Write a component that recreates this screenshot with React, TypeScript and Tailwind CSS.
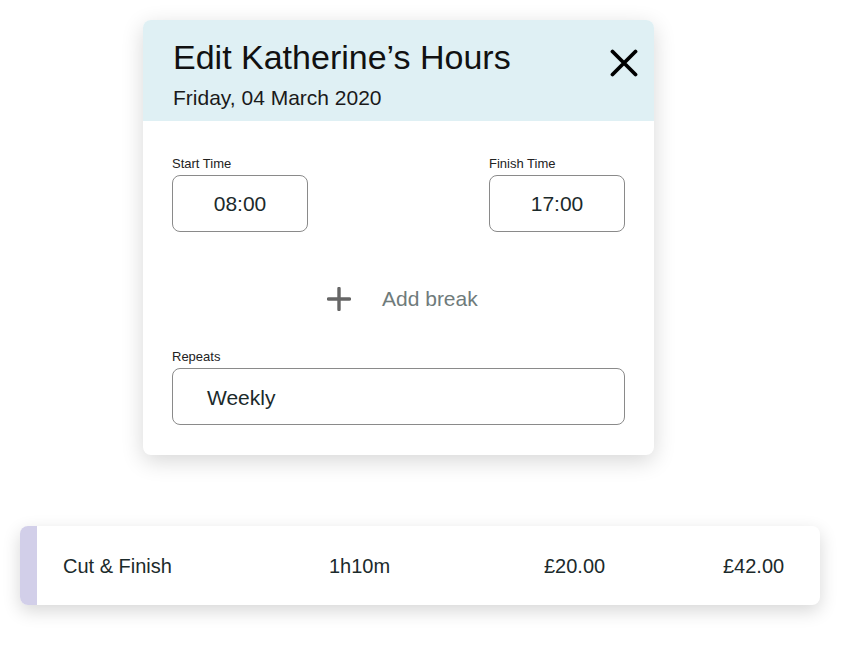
export default function App() {
  return (
    <div className="w-[861px] h-[646px] bg-white overflow-hidden font-['Liberation_Sans',Arial,sans-serif]">
      {/* Edit hours modal */}
      <div className="ml-[143px] mt-[20px] w-[511px] bg-white rounded-[8px] shadow-[0_6px_22px_rgba(0,0,0,0.16)] overflow-hidden">
        <div className="relative h-[101px] bg-[#dff0f4] pl-[30px] pt-[17px]">
          <h1 className="text-[34px] leading-[40px] text-[#111]">Edit Katherine’s Hours</h1>
          <p className="mt-[9px] text-[21px] leading-[24px] text-[#1a1a1a]">Friday, 04 March 2020</p>
          <button className="absolute right-[16px] top-[29px] w-[28px] h-[28px] flex items-center justify-center">
            <svg width="28" height="28" viewBox="0 0 28 28" fill="none" stroke="#000" strokeWidth="3.8" strokeLinecap="round">
              <path d="M2.5 2.5 L25.5 25.5 M25.5 2.5 L2.5 25.5" />
            </svg>
          </button>
        </div>

        <div className="px-[29px] pt-[35px] pb-[30px]">
          <div className="flex justify-between">
            <div>
              <div className="text-[13px] leading-[16px] text-[#222]">Start Time</div>
              <div className="mt-[3px] w-[136px] h-[57px] border border-[#8a8a8a] rounded-[8px] flex items-center justify-center text-[21px] text-[#1b2a2b]">
                08:00
              </div>
            </div>
            <div>
              <div className="text-[13px] leading-[16px] text-[#222]">Finish Time</div>
              <div className="mt-[3px] w-[136px] h-[57px] border border-[#8a8a8a] rounded-[8px] flex items-center justify-center text-[21px] text-[#1b2a2b]">
                17:00
              </div>
            </div>
          </div>

          <div className="mt-[55px] h-[24px] flex items-center pl-[155px]">
            <svg width="24" height="24" viewBox="0 0 24 24" fill="none" stroke="#666" strokeWidth="3.4" strokeLinecap="round">
              <path d="M12 1.5 V22.5 M1.5 12 H22.5" />
            </svg>
            <span className="ml-[31px] text-[21px] leading-[24px] text-[#6f7b7b]">Add break</span>
          </div>

          <div className="mt-[38px] text-[13px] leading-[16px] text-[#222]">Repeats</div>
          <div className="mt-[3px] h-[57px] border border-[#8a8a8a] rounded-[8px] flex items-center pl-[34px] pt-[3px] text-[21px] text-[#1b2a2b]">
            Weekly
          </div>
        </div>
      </div>

      {/* Service row */}
      <div className="ml-[20px] mt-[71px] w-[800px] h-[79px] bg-white rounded-[8px] overflow-hidden flex shadow-[0_6px_18px_rgba(0,0,0,0.16)]">
        <div className="w-[17px] bg-[#d2cfe9]" />
        <div className="flex-1 flex items-center pl-[26px] text-[20px] text-[#1b2a2b]">
          <span className="w-[266px]">Cut &amp; Finish</span>
          <span className="w-[215px]">1h10m</span>
          <span className="w-[179px]">£20.00</span>
          <span>£42.00</span>
        </div>
      </div>
    </div>
  );
}
